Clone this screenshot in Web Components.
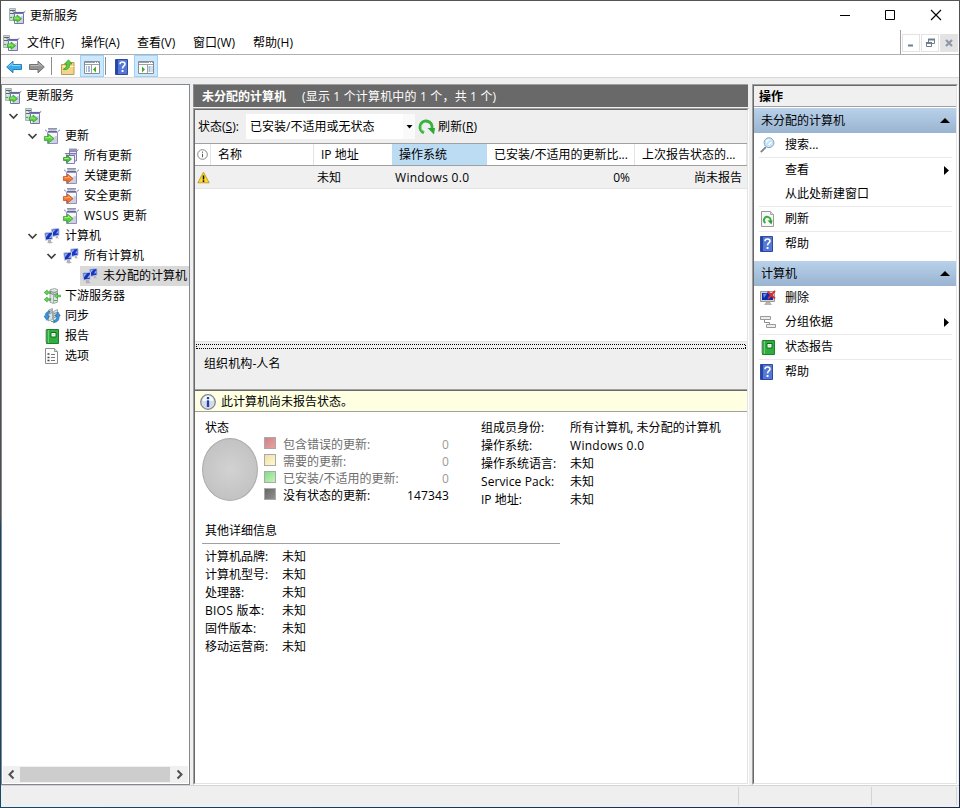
<!DOCTYPE html>
<html lang="zh-CN">
<head>
<meta charset="utf-8">
<title>更新服务</title>
<style>
html,body{margin:0;width:960px;height:808px;overflow:hidden}
body{font:12px/20px "Open Sans","Noto Sans CJK SC",sans-serif;color:#000;background:#efefef}
</style>
</head>
<body>
<ws-window>
  <ws-titlebar><ws-icon name="server" slot="icon"></ws-icon>更新服务</ws-titlebar>
  <ws-menubar>
    <ws-menu style="width:54px">文件(F)</ws-menu><ws-menu style="width:56px">操作(A)</ws-menu><ws-menu style="width:56px">查看(V)</ws-menu><ws-menu style="width:60px">窗口(W)</ws-menu><ws-menu>帮助(H)</ws-menu>
  </ws-menubar>
  <ws-toolbar></ws-toolbar>
  <ws-workspace>
    <ws-tree>
      <ws-node depth="0" icon="server">更新服务</ws-node>
      <ws-node depth="1" icon="server" open></ws-node>
      <ws-node depth="2" icon="package" open>更新</ws-node>
      <ws-node depth="3" icon="packages">所有更新</ws-node>
      <ws-node depth="3" icon="packageRed">关键更新</ws-node>
      <ws-node depth="3" icon="packageRed">安全更新</ws-node>
      <ws-node depth="3" icon="package" style="letter-spacing:.5px">WSUS 更新</ws-node>
      <ws-node depth="2" icon="computers" open>计算机</ws-node>
      <ws-node depth="3" icon="computers" open>所有计算机</ws-node>
      <ws-node depth="4" icon="computers" selected>未分配的计算机</ws-node>
      <ws-node depth="2" icon="downstream">下游服务器</ws-node>
      <ws-node depth="2" icon="sync">同步</ws-node>
      <ws-node depth="2" icon="report">报告</ws-node>
      <ws-node depth="2" icon="options">选项</ws-node>
    </ws-tree>
    <ws-results>
      <span slot="title">未分配的计算机</span>
      <span slot="count">(显示 1 个计算机中的 1 个，共 1 个)</span>
      <ws-filter></ws-filter>
      <ws-computer-list></ws-computer-list>
      <ws-splitter></ws-splitter>
      <ws-detail-head>组织机构-人名</ws-detail-head>
      <ws-notice>此计算机尚未报告状态。</ws-notice>
      <ws-details></ws-details>
    </ws-results>
    <ws-actions>
      <ws-action-group label="未分配的计算机">
        <ws-action icon="search" rule>搜索...</ws-action>
        <ws-action more>查看</ws-action>
        <ws-action rule>从此处新建窗口</ws-action>
        <ws-action icon="refreshPage" rule>刷新</ws-action>
        <ws-action icon="help">帮助</ws-action>
      </ws-action-group>
      <ws-action-group label="计算机">
        <ws-action icon="remove">删除</ws-action>
        <ws-action icon="group" more rule>分组依据</ws-action>
        <ws-action icon="report" rule>状态报告</ws-action>
        <ws-action icon="help">帮助</ws-action>
      </ws-action-group>
    </ws-actions>
  </ws-workspace>
  <ws-statusbar></ws-statusbar>
</ws-window>
<script>
// Shared icon artwork on a 16-unit grid.
const arrow = (fill, edge, shine) => `<path d="M.4 8.600h4.100V6l5.500 4.600-5.500 4.600v-2.600H.4z" fill="${fill}" stroke="${edge}" stroke-width=".8"/><path d="M1.300 9.700h4V8.200l2.500 2.300" fill="none" stroke="${shine}" stroke-width=".9"/>`;
const greenArrow = arrow('#55d234', '#3a9a35', '#b4f596');
const redArrow = arrow('#f4742b', '#b9501f', '#ffb684');
const pack = '<path d="M3.500 4.500h10v11h-10z" fill="#f6f6fb" stroke="#8f8fc0"/><path d="M11 8h2v7H6z" fill="#cfd0de"/><path d="M1 1.800l2.500 2M16 1.800l-2.500 2" stroke="#7d7db0"/><path d="M4.500 1h8v2.500h-8z" fill="#c3cdcd"/><path d="M4 .8h9M4 3.500h9" stroke="#65659a"/>';
const book = '<path d="M2.500 1.500h12v14h-12z" fill="#2fae3f" stroke="#1b8228"/><path d="M4.500 2v13" stroke="#62d66c"/><path d="M7 4.500h5v4.500H7z" fill="#fff" stroke="#0d6a1b"/><path d="M8.500 6.700h2" stroke="#8fd496"/><path d="M1 3h2M1 5h2M1 7h2M1 9h2M1 11h2M1 13h2" stroke="#999"/>';
const ICONS = {
  server:'<path d="M.5.500h6v12h-6z" fill="#cdd9d9" stroke="#9aa6a8" stroke-width=".8"/><path d="M1 2.500h5M1 5.500h4" stroke="#56666a"/><path d="M1.500 4h3M1.500 7h2" stroke="#f2f7f7"/><path d="M1 9.500h2" stroke="#3caa40"/><path d="M5.500 5.500h9v10h-9z" fill="#f4f4fb" stroke="#7474ac"/><path d="M5 4.500h10" stroke="#65659f" stroke-width="1.200"/><path d="M3.500 3.300l2 1.500M16.300 3.300l-1.800 1.500" stroke="#65659f"/><path d="M12 8h2v7h-5z" fill="#d0d1e2"/><path d="M4.400 9h3.600V7l4.600 3.700L8 14.400v-2H4.400z" fill="#55d234" stroke="#3a9a35" stroke-width=".8"/><path d="M5.300 10h3.200l1.300 1" fill="none" stroke="#b9f59c" stroke-width=".9"/>',
  package: pack+greenArrow,
  packageRed: pack+redArrow,
  packages:'<path d="M6.500 3h7v10h-7z" fill="#e8e9f5" stroke="#8080b4"/><path d="M6 1.200h8M6 3h8" stroke="#65659a"/><path d="M3.500 7.500h8v8h-8z" fill="#f3f4fa" stroke="#8080b4"/><path d="M3 5.500h9M3 7.200h9M1.800 5l1.500 1.500M13 5l-1 1.500M15.500 1.500L14 3" stroke="#6b6ba0" stroke-width=".9"/><path d="M.5 9.500h3.500V7.300l4.500 3.700L4 14.700v-2.200H.5z" fill="#4cc634" stroke="#389235" stroke-width=".8"/><path d="M1.500 10.500h4" stroke="#b4f596"/>',
  computers:'<path d="M7.500 1.200L15 .5v6.700l-6.500 1.300z" fill="#1a35c4" stroke="#bac4de"/><path d="M8.500 2l3.200-.3L8.500 5zM12 5.500L14.300 2v3.300z" fill="#8eabf2"/><path d="M12 8.300l2-.4v1.600l1.500.8h-4z" fill="#b5b5b5"/><path d="M.8 5l7.700-1v7l-7 1.200z" fill="#1732ba" stroke="#c2c9da"/><path d="M1.600 5.800l3.600-.5-3.200 4zM5 10.300L8 6v3.800z" fill="#8eabf2"/><path d="M4 12l3-.4v1.900l2 1.200-3.500.8-2.700-1.200L4 13.700z" fill="#b2b2b2"/>',
  downstream:'<path d="M6 1.800L10.500.5l3 1v12.700l-4 1.300-3.500-1.300z" fill="#dde4e2" stroke="#8c9592" stroke-width=".8"/><path d="M9.500 3.500V15" stroke="#a1aba7"/><path d="M6.500 3.500l2.500.8M6.500 5.500l2.500.8M10 4.500l3-.8M10 6.500l3-.8" stroke="#5e6a67" stroke-width=".8"/><path d="M10 12.500h3" stroke="#46b646"/><path d="M.2 4.500L3.200 2v1.700h3.600v1.600H3.200V7zM.2 11.500L3.200 9v1.700h3.600v1.600H3.200V14zM10.500 8l3-2.500v1.700h3v1.600h-3v1.700z" fill="#6ed558" stroke="#339a38" stroke-width=".7"/>',
  sync:'<path d="M4.500 2L8.500.5v11l-4 1.500zM9.500 3.500l4-2V12l-4 3z" fill="#dbe2e2" stroke="#8b989a" stroke-width=".8"/><path d="M5 3.500l3-.8M5 5.500l3-.8M10 5.500l3-1M10 7.500l3-1M10 9.500l3-1" stroke="#657780" stroke-width=".8"/><path d="M5.500 3C1.500 4 1 6.500 1.500 8.200H0L3 12.500 5.500 8H4C3.500 6 4.500 5 5.500 4.500zM10 14.500c4-.5 5.500-3 5-6.500H16.300L14 4l-2.800 4h1.600c.2 2.600-.8 4-2.800 4.600z" fill="#3b94e0" stroke="#22669f" stroke-width=".6"/><path d="M7 13.500h2.500" stroke="#42b74a"/>',
  report: book,
  options:'<path d="M1.500.5h9l3 3v12h-12z" fill="#fdfdfd" stroke="#8a8a8a"/><path d="M10.500.5v3h3" fill="#ddd" stroke="#999"/><path d="M3.500 6h2M3.500 9.500h2M3.500 12.500h2" stroke="#444" stroke-width="1.700"/><path d="M7 6.500h4M7 9.500h4M7 12.500h4" stroke="#777"/>',
  back:'<path d="M.7 8L7 2.200v3.300h8.500v5H7v3.300z" fill="#3aaae8" stroke="#2a7fb9"/><path d="M2.500 7.500L6 4.300v2.200h8.500" fill="none" stroke="#8cd8fb"/>',
  forward:'<path d="M15.300 8L9 2.200v3.300H.5v5H9v3.300z" fill="#949494" stroke="#727272"/><path d="M1.500 6.500H10V4.500l3 3" fill="none" stroke="#bcbcbc"/>',
  folder:'<path d="M1.500 5.500h5l1-2h6.500v12h-12.500z" fill="#f0d68c" stroke="#bc9a50"/><path d="M2 7.500h12" stroke="#fff0b5"/><path d="M3.500 10C6 9.500 6.500 7.500 6.500 5H4.500l4-4.200L12 5h-2.200c0 4-2.300 6-6.300 5.500z" fill="#59cd39" stroke="#33922a" stroke-width=".7"/>',
  paneLeft:'<path d="M.5 2.500h15v12H.5z" fill="#fff" stroke="#858b91"/><path d="M1 3.500h14M1 5.500h14" stroke="#9aa1a8"/><path d="M11 3.500h1M13 3.500h1" stroke="#fff"/><path d="M7.500 6v8" stroke="#9aa1a8"/><path d="M2 8h1M2 10h1M2 12h1M4 8h2M4 10h2M4 12h2" stroke="#4b7bb2"/><path d="M12 7.500v6L9 10.500z" fill="#43a626"/>',
  paneRight:'<path d="M.5 2.500h15v12H.5z" fill="#fff" stroke="#858b91"/><path d="M1 3.500h14M1 5.500h14" stroke="#9aa1a8"/><path d="M11 3.500h1M13 3.500h1" stroke="#fff"/><path d="M9.500 6v8" stroke="#9aa1a8"/><path d="M10.500 8h2M10.500 10h2M10.500 12h2M13.500 8h1M13.500 10h1M13.500 12h1" stroke="#4b7bb2"/><path d="M4 7.500v6l3-3z" fill="#43a626"/>',
  help:'<path d="M.5.5h12v15H.5z" fill="#5577d6" stroke="#2f4a9f"/><path d="M2 1v14" stroke="#2346a8" stroke-width="2"/><path d="M5 5.200C5 2.500 10 2.300 10 5c0 2-2.500 2-2.500 4.500" fill="none" stroke="#fff" stroke-width="1.600"/><path d="M6.600 11h1.900v2H6.600z" fill="#fff"/>',
  search:'<path d="M.8 15.200l5-5" stroke="#7b858d" stroke-width="1.900"/><circle cx="9" cy="5.700" r="4.900" fill="#c5e6f8" stroke="#86a4ba"/><path d="M6.500 5.500a3 3 0 013-2.800M8.500 8l3-3" stroke="#fff" fill="none" stroke-width="1.300"/>',
  refreshPage:'<path d="M1.500.5h9l3 3v12h-12z" fill="#f8f8f8" stroke="#9a9a9a"/><path d="M10.500.5v3h3" fill="#ddd" stroke="#aaa"/><path d="M5.500 12A3.300 3.300 0 1110.500 10" fill="none" stroke="#36ae3b" stroke-width="2"/><path d="M7.500 9.500h5l-1 4z" fill="#2a9c31"/>',
  refresh:'<path d="M5 13.700A6 6 0 1113 9" fill="none" stroke="#35b33b" stroke-width="3"/><path d="M4.500 12.800A5.200 5.200 0 013.500 5" fill="none" stroke="#91df88"/><path d="M8.500 9h7.500l-1 6.500z" fill="#2fa935"/>',
  remove:'<path d="M.5 1.500h14v10H.5z" fill="#d5d5d5" stroke="#999"/><path d="M2 3h11v7H2z" fill="#0a2cb2"/><path d="M3 4l4-.5L4 8z" fill="#5f8eee"/><path d="M6 12h4l2 3H4z" fill="#b8b5a7"/><path d="M7.500 1.500l7.500 7M15 .8l-7 8" stroke="#e2302c" stroke-width="1.800"/>',
  group:'<path d="M.5 2.500h10v3H.5zM6.500 10.500h9v3h-9z" fill="#ededed" stroke="#999"/><path d="M4.500 6v2.500h5V10" fill="none" stroke="#888"/>',
  warning:'<path d="M8 1.500L15 14.500H1z" fill="#ffd92c" stroke="#b3901a" stroke-linejoin="round"/><path d="M8 5.500v5M8 11.500v2" stroke="#111" stroke-width="1.900"/>',
  info:'<circle cx="8" cy="8" r="7.300" fill="#d6dbe6" stroke="#828793" stroke-width="1.300"/><path d="M2.500 7a5.500 5.500 0 0111 0" fill="#f6f8fc"/><path d="M8 6.300V13" stroke="#1c3fae" stroke-width="2.300"/><path d="M6.850 3h2.300v2.200h-2.300z" fill="#1c3fae"/>',
  infoThin:'<circle cx="8" cy="8" r="7" fill="#fff" stroke="#777" stroke-width="1.300"/><path d="M8 7v5" stroke="#555" stroke-width="1.500"/><path d="M7.200 3.800h1.600v1.700H7.200z" fill="#555"/>'
};
function define(tag, css, html, setup){
  const tpl = document.createElement('template');
  tpl.innerHTML = `<style>*{box-sizing:border-box}${css}</style>${html}`;
  customElements.define(tag, class extends HTMLElement{
    constructor(){ super(); this.attachShadow({mode:'open'}).append(tpl.content.cloneNode(true)); }
    connectedCallback(){ if(setup) setup(this, this.shadowRoot); }
  });
}
define('ws-icon', ':host{display:block;flex:none;width:16px;height:16px}svg{display:block;width:100%;height:100%;overflow:visible}', '<svg viewBox="0 0 16 16"></svg>',
  (el,r)=>{ r.querySelector('svg').innerHTML = ICONS[el.getAttribute('name')] || ''; });

define('ws-window', `:host{display:flex;flex-direction:column;box-sizing:border-box;width:960px;height:808px;padding:1px;
  background:linear-gradient(#555,#555) 0 0/100% 1px no-repeat,linear-gradient(90deg,#174868,#1b2845) 0 100%/100% 1px no-repeat,linear-gradient(#505050 64%,#174868 65%) 0 0/1px 100% no-repeat,linear-gradient(#505055 64%,#1b2845 95%) 100% 0/1px 100% no-repeat,#efefef}`, '<slot></slot>');

define('ws-titlebar', `:host{display:flex;height:29px;background:#fff;align-items:center;padding-left:8px;gap:5px;box-sizing:border-box}
  .t{flex:1}.b{display:grid;grid-template-columns:46px 46px 46px}.b svg{width:46px;height:28px;display:block}`,
  `<slot name="icon"></slot><span class="t"><slot></slot></span><div class="b">
  <svg><path d="M19 13.500h10" stroke="#000"/></svg><svg><path d="M18.500 8.500h9v9h-9z" fill="none" stroke="#000"/></svg><svg><path d="M18 8l10 10M28 8l-10 10" stroke="#000" stroke-width="1.100"/></svg></div>`);

define('ws-menu', ':host{display:block;box-sizing:border-box;white-space:nowrap}', '<slot></slot>');
define('ws-menubar', `:host{display:flex;height:25px;background:#fff;border-bottom:1px solid #b0b0b0;box-sizing:border-box;align-items:center;padding-left:2px}
  ws-icon{margin-top:2px}
  .m{display:flex;flex:1;padding:2px 0 0 8px}.w{display:grid;grid-template-columns:18px 18px 18px;gap:1px;height:24px;align-items:center;border-left:1px solid #a0a0a0;padding:2px 1px 0 1px;}
  .w div{height:18px;border:1px solid #e3e3e3}.w div:last-child{background:#e3e3e3}svg{display:block;width:16px;height:16px}`,
  `<ws-icon name="server"></ws-icon><div class="m"><slot></slot></div><div class="w">
  <div><svg><path d="M5 10.500h5" stroke="#6f7e8e" stroke-width="2"/></svg></div>
  <div><svg><path d="M6.500 7V4.500h6v4H10" fill="none" stroke="#6f7e8e"/><path d="M6 4.500h7" stroke="#6f7e8e" stroke-width="2"/><path d="M4.500 7.500h5v4h-5z" fill="none" stroke="#6f7e8e"/><path d="M4 8h6" stroke="#6f7e8e" stroke-width="2"/></svg></div>
  <div><svg><path d="M5 5l6 6M11 5l-6 6" stroke="#8d99aa" stroke-width="2.200"/></svg></div></div>`);

define('ws-toolbar', `:host{display:flex;height:23px;background:#fff;border-bottom:1px solid #d9d9d9;box-sizing:border-box;align-items:center;padding-left:5px}
  .s{width:1px;height:18px;background:#8d8d8d}.on{display:grid;place-items:center;width:24px;height:22px;background:#cce8ff;border:1px solid #99d1ff}
  .on ws-icon{margin-top:1px}ws-icon{margin-top:1px}`,
  `<ws-icon name="back"></ws-icon><ws-icon name="forward" style="margin-left:7px"></ws-icon><i class="s" style="margin:0 8px 0 6px"></i>
  <ws-icon name="folder"></ws-icon><div class="on" style="margin-left:4px"><ws-icon name="paneLeft"></ws-icon></div><i class="s" style="margin:0 9px 0 1px"></i>
  <ws-icon name="help"></ws-icon><div class="on" style="margin-left:3px"><ws-icon name="paneRight"></ws-icon></div>`);

define('ws-workspace', ':host{display:grid;flex:none;height:708px;box-sizing:border-box;padding:6px 1px 1px 0;grid-template-columns:189px 556px 206px;column-gap:3px;border-bottom:1px solid #d4d4d4}', '<slot></slot>');

define('ws-tree', `:host{display:flex;flex-direction:column;box-sizing:border-box;height:701px;border:1px solid #828790;background:#fff;padding:1px 1px 1px;overflow:hidden}
  .n{flex:1}.h{height:17px;display:grid;grid-template-columns:17px 150px 1fr;background:#f0f0f0;align-items:center}.h b{height:15px;background:#cdcdcd}svg{display:block;width:17px;height:15px}`,
  `<div class="n"><slot></slot></div><div class="h"><svg><path d="M10.500 3.500l-4 4 4 4" fill="none" stroke="#505050" stroke-width="2"/></svg><b></b><svg><path d="M7.500 3.500l4 4-4 4" fill="none" stroke="#505050" stroke-width="2"/></svg></div>`);

define('ws-node', `:host{display:flex;height:20px;align-items:center;box-sizing:border-box;white-space:nowrap}
  .c{flex:none;width:19px;height:20px}.l{height:20px;line-height:20px;display:flex;align-items:center;padding:0 2px;gap:5px}
  :host([selected]) .l{background:#d9d9d9;flex:1;margin-right:-1px}path{display:none}:host([open]) path{display:inline}`,
  `<svg class="c"><path d="M5.500 8l4 4 4-4" fill="none" stroke="#404040" stroke-width="1.700"/></svg><div class="l"><ws-icon></ws-icon><span><slot></slot></span></div>`,
  (el,r)=>{ const d=+el.getAttribute('depth'); r.querySelector('.c').style.marginLeft=((d-1)*19+1)+'px';
    if(d===0) r.querySelector('.l').style.cssText='padding-left:1px;margin-left:0';
    const ic=r.querySelector('ws-icon'); ic.setAttribute('name',el.getAttribute('icon')); customElements.upgrade(ic); ic.shadowRoot.querySelector('svg').innerHTML=ICONS[el.getAttribute('icon')]; });

define('ws-results', `:host{display:flex;flex-direction:column;height:701px;min-width:0}
  header{flex:none;display:flex;height:23px;background:#696969;border-top:1px solid #a0a0a0;border-left:1px solid #8a8a8a;color:#fff;align-items:center;padding:1px 0 0 8px;gap:16px;margin-right:1px;white-space:nowrap}
  header b{font-weight:700}header em{font-style:normal;letter-spacing:.17px}
  .b{flex:1;margin-top:1px;display:flex;flex-direction:column;border-top:1px solid #a0a0a0;border-left:1px solid #a0a0a0;border-right:1px solid #fff;border-bottom:1px solid #fff}
  .i{flex:1;display:flex;flex-direction:column;border:1px solid #696969;border-right-color:#e3e3e3;border-bottom-color:#e3e3e3;background:#fff}`,
  '<header><b><slot name="title"></slot></b><em><slot name="count"></slot></em></header><div class="b"><div class="i"><slot></slot></div></div>');

define('ws-filter', `:host{display:flex;flex:none;height:34px;box-sizing:border-box;background:#efefef;border-bottom:1px solid #a0a0a0;align-items:center;padding-left:3px;white-space:nowrap}
  .l{width:48px}.c{width:169px;height:25px;display:flex;align-items:center;background:#fff;padding-left:4px;line-height:25px}.c span{flex:1}
  .c svg{width:12px;height:25px;background:#fafafa}ws-icon{margin:0 3px 0 4px}u{text-underline-offset:1px}`,
  `<span class="l">状态(<u>S</u>):</span><div class="c"><span>已安装/不适用或无状态</span><svg><path d="M3.500 11h6L6.500 14.500z"/></svg></div><ws-icon name="refresh"></ws-icon><span style="letter-spacing:.15px">刷新(<u>R</u>)</span>`);

define('ws-computer-list', `:host{display:block;flex:none;height:198px;border-bottom:1px solid #e3e3e3;box-sizing:border-box;background:#fff;white-space:nowrap}
  .r{display:grid;grid-template-columns:16px 103px 78px 95px 148px 112px}.h{height:22px;border-bottom:1px solid #a0a0a0;line-height:21px}
  .h>*{border-right:1px solid #e3e3e3;padding-left:7px;overflow:hidden}.h>:nth-child(4){background:#bcdcf4;border-color:#bcdcf4}.h>:nth-child(3){border-color:#fff}
  .h>:first-child,.d>:first-child{padding:0;display:grid;place-items:center}.h ws-icon{width:11px;height:11px}.d{height:23px;line-height:23px;background:#f0f0f0;border-bottom:1px solid #e3e3e3}
  .d>*{padding-left:3px}.d .e{text-align:right;padding-right:5px}.d ws-icon{width:13px;height:13px}`,
  `<div class="r h"><div><ws-icon name="infoThin"></ws-icon></div><div>名称</div><div>IP 地址</div><div>操作系统</div><div>已安装/不适用的更新比...</div><div>上次报告状态的...</div></div>
  <div class="r d"><div><ws-icon name="warning"></ws-icon></div><div></div><div>未知</div><div style="letter-spacing:.3px">Windows 0.0</div><div class="e">0%</div><div class="e">尚未报告</div></div>`);

define('ws-splitter', ':host{display:block;flex:none;height:7px;background:#efefef;box-sizing:border-box;padding:2px 0 0 1px}svg{display:block;width:551px;height:5px}',
  '<svg><path d="M0 .5h550M1 4.500h549M.5 0v5M549.500 1v4" stroke="#000" stroke-dasharray="1 1"/></svg>');
define('ws-detail-head', ':host{display:block;flex:none;box-sizing:border-box;height:42px;background:#efefef;border-bottom:1px solid #696969;box-shadow:inset 0 -1px #a0a0a0;padding:5px 0 0 9px;letter-spacing:.1px}', '<slot></slot>');
define('ws-notice', ':host{display:flex;flex:none;box-sizing:border-box;height:21px;background:#ffffe1;border-bottom:1px solid #a0a0a0;align-items:center;padding:1px 0 0 5px;gap:5px}', '<ws-icon name="info"></ws-icon><span><slot></slot></span>');

define('ws-legend', `:host{display:grid;grid-template-columns:12px 130px 29px;column-gap:7px;height:17px;color:#6d6d6d;line-height:14px;white-space:nowrap}
  i{width:12px;height:12px;border:1px solid #aaa;background:linear-gradient(135deg,var(--a),var(--b));margin-top:-1px}.v{display:flex;justify-content:flex-end;color:#999;letter-spacing:.15px}
  :host([on]),:host([on]) .v{color:#000}`,
  '<i></i><span><slot></slot></span><span class="v"><slot name="value"></slot></span>');
define('ws-pairs', ':host{display:grid;grid-template-columns:var(--label) auto;grid-auto-rows:18px;line-height:18px;white-space:nowrap;justify-content:start}', '<slot></slot>');

define('ws-details', `:host{display:block;flex:1;background:#fff;padding:6px 0 0 7px}
  .top{display:grid;grid-template-columns:62px 217px auto;height:103px}.s{padding-left:3px;line-height:20px;grid-column:1/3}
  .left{display:grid;grid-template-columns:62px 217px;grid-template-rows:20px 68px;grid-column:1/3}
  .e{width:56px;height:63px;border-radius:50%;background:radial-gradient(circle at 50% 50%,#d2d2d2,#bdbdbd);border:1px solid #aaa}
  h4{font:inherit;margin:0;padding:0 3px;width:358px;height:23px;border-bottom:1px solid #a0a0a0;line-height:20px}
  .more{padding:4px 0 0 3px}`,
  `<div class="top"><div class="left"><div class="s">状态</div><div class="e"></div><div>
    <ws-legend style="--a:#cf8388;--b:#eaa0a0">包含错误的更新:<span slot="value">0</span></ws-legend>
    <ws-legend style="--a:#f1dfb0;--b:#fffac8">需要的更新:<span slot="value">0</span></ws-legend>
    <ws-legend style="--a:#86d98b;--b:#c3f5b8">已安装/不适用的更新:<span slot="value">0</span></ws-legend>
    <ws-legend on style="--a:#666;--b:#929292">没有状态的更新:<span slot="value">147343</span></ws-legend></div></div>
    <ws-pairs style="--label:89px;padding-top:1px"><span>组成员身份:</span><span style="letter-spacing:.05px">所有计算机, 未分配的计算机</span><span>操作系统:</span><span style="letter-spacing:.3px">Windows 0.0</span><span>操作系统语言:</span><span>未知</span><span style="letter-spacing:.1px">Service Pack:</span><span>未知</span><span>IP 地址:</span><span>未知</span></ws-pairs></div>
  <h4>其他详细信息</h4>
  <div class="more"><ws-pairs style="--label:77px"><span>计算机品牌:</span><span>未知</span><span>计算机型号:</span><span>未知</span><span>处理器:</span><span>未知</span><span style="letter-spacing:.25px">BIOS 版本:</span><span>未知</span><span>固件版本:</span><span>未知</span><span>移动运营商:</span><span>未知</span></ws-pairs></div>`);

define('ws-actions', `:host{display:block;height:701px;border-top:1px solid #a0a0a0;border-left:1px solid #a0a0a0;border-right:1px solid #fff;border-bottom:1px solid #fff;box-sizing:border-box}
  .i{height:100%;border:1px solid #696969;border-right-color:#e3e3e3;border-bottom-color:#e3e3e3;background:#fff}
  h3{margin:0 0 1px;height:21px;font:700 12px/22px "Open Sans","Noto Sans CJK SC",sans-serif;background:#f0f0f0;border-bottom:1px solid #a0a0a0;padding-left:5px}`,
  '<div class="i"><h3>操作</h3><slot></slot></div>');
define('ws-action-group', `:host{display:block;padding-bottom:5px}.g{height:25px;display:flex;justify-content:space-between;align-items:center;background:linear-gradient(#b9d1ea,#99b4d1);padding:0 6px 0 7px;line-height:25px}
  svg{width:10px;height:5px}`, '<div class="g"><span></span><svg><path d="M0 5L5 0l5 5z"/></svg></div><slot></slot>',
  (el,r)=>{ r.querySelector('span').textContent=el.getAttribute('label'); });
define('ws-action', `:host{display:flex;height:24px;align-items:center;padding:0 7px 0 6px;gap:9px;box-sizing:border-box;position:relative}
  :host([rule]){height:25px;padding-bottom:1px;background:linear-gradient(#e9e9e9,#e9e9e9) 5px 100%/193px 1px no-repeat}
  span{flex:1}svg{display:none;width:5px;height:9px}:host([more]) svg{display:block}`,
  '<ws-icon></ws-icon><span><slot></slot></span><svg><path d="M0 0l5 4.500L0 9z"/></svg>',
  (el,r)=>{ const ic=r.querySelector('ws-icon'); customElements.upgrade(ic); ic.shadowRoot.querySelector('svg').innerHTML=ICONS[el.getAttribute('icon')]||''; ic.setAttribute('name',el.getAttribute('icon')||''); });

define('ws-statusbar', `:host{display:grid;grid-template-columns:738px 133px 85px;flex:1;background:#efefef;padding:1px 0 2px}i{border-right:1px solid #d4d4d4}`, '<i></i><i></i><i></i>');
</script>
</body>
</html>
